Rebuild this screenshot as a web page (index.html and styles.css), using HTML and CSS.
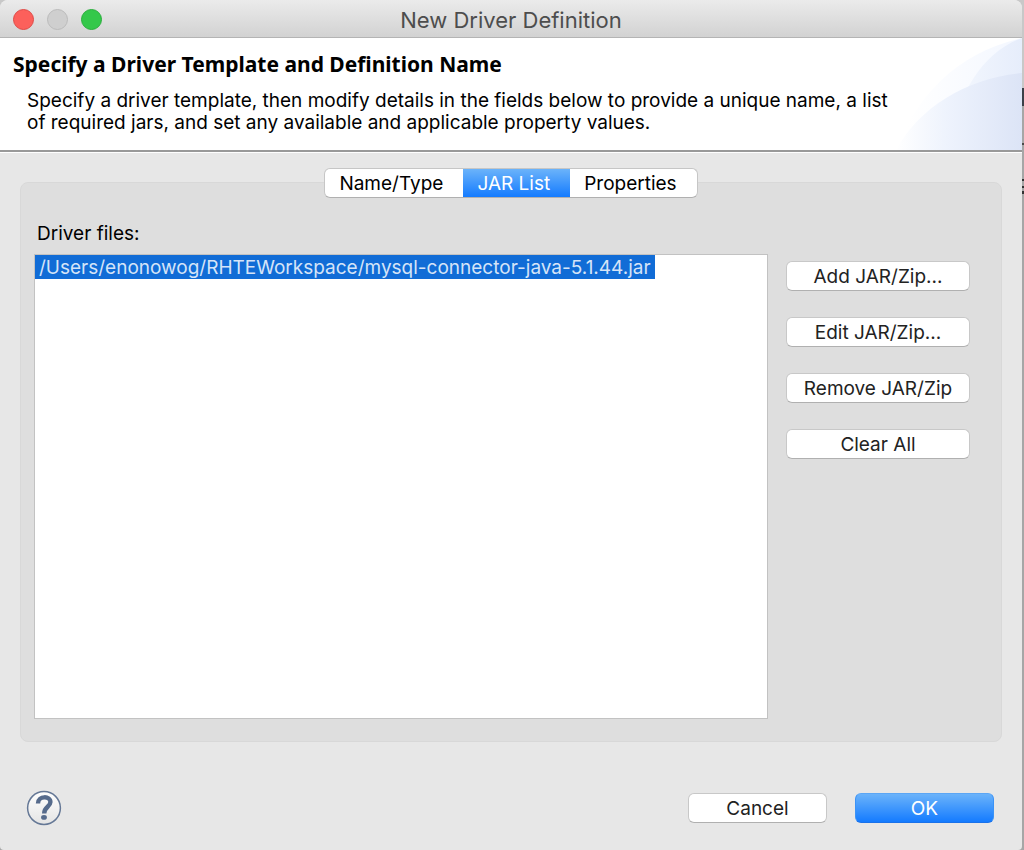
FILE: index.html
```
<!DOCTYPE html>
<html lang="en">
<head>
    <meta charset="UTF-8">
    <meta name="viewport" content="width=device-width, initial-scale=1.0">
    <title>New Driver Definition</title>
    <link rel="stylesheet" href="styles.css">
</head>
<body>
    <div class="window">
        <div class="titlebar">
            <div class="lights">
                <button class="light close" aria-label="Close"></button>
                <button class="light minimize" aria-label="Minimize" disabled></button>
                <button class="light zoom" aria-label="Zoom"></button>
            </div>
            <div class="title">New Driver Definition</div>
        </div>

        <div class="header">
            <svg class="header-art" width="130" height="112" viewBox="0 0 130 112" aria-hidden="true">
                <defs>
                    <linearGradient id="outer" gradientUnits="userSpaceOnUse" x1="15" y1="0" x2="130" y2="0">
                        <stop offset="0" stop-color="#ffffff"/>
                        <stop offset="1" stop-color="#f3f7ff"/>
                    </linearGradient>
                    <linearGradient id="middle" gradientUnits="userSpaceOnUse" x1="65" y1="0" x2="130" y2="0">
                        <stop offset="0" stop-color="#f3f7fe"/>
                        <stop offset="1" stop-color="#e6edfb"/>
                    </linearGradient>
                    <linearGradient id="inner" gradientUnits="userSpaceOnUse" x1="4" y1="0" x2="130" y2="0">
                        <stop offset="0" stop-color="#ffffff"/>
                        <stop offset="0.4" stop-color="#eef3fd"/>
                        <stop offset="1" stop-color="#dce4f6"/>
                    </linearGradient>
                </defs>
                <path fill="url(#outer)" d="M4 112C24 58 66 14 130 0V112Z"/>
                <path fill="url(#middle)" d="M56 112C66 52 92 14 130 0V112Z"/>
                <path fill="url(#inner)" d="M4 112C28 68 76 40 130 35V112Z"/>
            </svg>
            <h1>Specify a Driver Template and Definition Name</h1>
            <p>Specify a driver template, then modify details in the fields below to provide a unique name, a list of required jars, and set any available and applicable property values.</p>
        </div>

        <div class="content">
            <div class="group">
                <div class="tabs" role="tablist">
                    <button class="tab" role="tab" aria-selected="false">Name/Type</button>
                    <button class="tab active" role="tab" aria-selected="true">JAR List</button>
                    <button class="tab" role="tab" aria-selected="false">Properties</button>
                </div>

                <div class="list-label" id="filesLabel">Driver files:</div>
                <div class="columns">
                    <ul class="file-list" role="listbox" aria-labelledby="filesLabel" tabindex="0">
                        <li class="selected" role="option" aria-selected="true">/Users/enonowog/RHTEWorkspace/mysql-connector-java-5.1.44.jar</li>
                    </ul>
                    <div class="actions">
                        <button class="btn">Add JAR/Zip...</button>
                        <button class="btn">Edit JAR/Zip...</button>
                        <button class="btn">Remove JAR/Zip</button>
                        <button class="btn">Clear All</button>
                    </div>
                </div>
            </div>

            <div class="footer">
                <button class="help" aria-label="Help">
                    <svg width="36" height="36" viewBox="0 0 36 36" aria-hidden="true">
                        <defs>
                            <linearGradient id="helpFill" x1="0" y1="0" x2="0" y2="1">
                                <stop offset="0" stop-color="#ffffff"/>
                                <stop offset="1" stop-color="#e4e4e4"/>
                            </linearGradient>
                        </defs>
                        <circle cx="18" cy="18" r="16.4" fill="url(#helpFill)" stroke="#657896" stroke-width="1.5"/>
                        <path d="M12 13.4C12 5.4 24.8 5.6 24.4 12.2C24.2 17 18.2 16.8 18.2 23.4" fill="none" stroke="#566b8c" stroke-width="4.4"/>
                        <ellipse cx="18" cy="27.4" rx="2.9" ry="2.3" fill="#566b8c"/>
                    </svg>
                </button>
                <button class="btn">Cancel</button>
                <button class="btn primary">OK</button>
            </div>
        </div>
    </div>
</body>
</html>
```
FILE: styles.css
```
* {
    margin: 0;
    padding: 0;
    box-sizing: border-box;
}

/* The strip on the right is the desktop showing past the window */
body {
    min-height: 100vh;
    padding-right: 2px;
    background: linear-gradient(#c8c8c8 88px, #3c4048 88px, #3c4048 106px, #a6a6a6 106px, #a6a6a6 143px, #4a4a4a 143px, #4a4a4a 145px, #a6a6a6 145px, #a6a6a6 179px, #333 179px, #333 181px, #a6a6a6 181px, #a6a6a6 186px, #333 186px, #333 188px, #a6a6a6 188px, #a6a6a6 191px, #333 191px, #333 194px, #a6a6a6 194px);
    color: #000;
    font-family: Inter, Roboto, sans-serif;
    font-size: 19px;
    line-height: 22px;
}

button {
    font: inherit;
    border: none;
}

.window {
    display: flex;
    flex-direction: column;
    min-height: 100vh;
    background: #e7e7e7;
    border-radius: 8px 8px 4px 4px;
    overflow: hidden;
}

/* Title bar */
.titlebar {
    display: grid;
    grid-template-columns: 1fr auto 1fr;
    align-items: center;
    height: 38px;
    padding: 2px 12px 0;
    background: linear-gradient(#ebebeb, #d2d2d2);
    border-bottom: 1px solid #b4b4b4;
}

.lights {
    display: flex;
    gap: 13px;
    padding-left: 1px;
}

.light {
    width: 21px;
    height: 21px;
    border-radius: 50%;
    border: 1px solid;
}

.close {
    background: #fc605b;
    border-color: #df4a46;
}

.minimize {
    background: #cfcfcf;
    border-color: #bbb;
}

.zoom {
    background: #34c84a;
    border-color: #2aae3c;
}

.title {
    color: #4d4d4d;
    font-size: 22px;
}

/* Header */
.header {
    position: relative;
    padding: 14px 120px 16px 13px;
    background: #fff;
    border-bottom: 2px solid #999;
}

.header-art {
    position: absolute;
    top: 0;
    right: 0;
}

.header h1 {
    font-family: "Noto Sans", "Open Sans", sans-serif;
    font-size: 21px;
    line-height: 24px;
    font-weight: bold;
}

.header p {
    margin: 14px 0 0 14px;
}

/* Content */
.content {
    flex: 1;
    display: flex;
    flex-direction: column;
    padding: 29px 20px 24px;
    border-top: 1px solid #fff;
}

.group {
    flex: 1;
    display: flex;
    flex-direction: column;
    padding: 0 31px 22px 13px;
    background: #dedede;
    border: 1px solid #d8d8d8;
    border-radius: 8px;
}

.tabs {
    display: flex;
    align-self: center;
    margin: -15px 0 24px 18px;
    background: #fff;
    border: 1px solid #c6c6c6;
    border-bottom-color: #b0b0b0;
    border-radius: 6px;
}

.tab {
    height: 28px;
    padding: 2px 20px 0 14px;
    background: none;
}

.tab.active {
    background: linear-gradient(#6bb3fa, #147bff);
    color: #fff;
}

.list-label {
    margin: 1px 0 9px 3px;
}

.columns {
    flex: 1;
    display: flex;
    gap: 18px;
}

.file-list {
    flex: 1;
    background: #fff;
    border: 1px solid #c2c2c2;
    list-style: none;
}

.selected {
    width: fit-content;
    padding: 2px 4px 0;
    background: #116cd6;
    color: #d5e4f8;
}

.actions {
    display: flex;
    flex-direction: column;
    gap: 26px;
    width: 184px;
    padding-top: 7px;
}

.btn {
    height: 30px;
    padding-top: 1px;
    background: #fff;
    border: 1px solid #c8c8c8;
    border-bottom-color: #b0b0b0;
    border-radius: 6px;
    color: #222;
}

/* Footer */
.footer {
    display: flex;
    align-items: center;
    gap: 28px;
    margin-top: 48px;
    padding: 0 8px 0 6px;
}

.footer .btn {
    width: 139px;
}

.help {
    width: 36px;
    height: 36px;
    margin-right: auto;
    background: none;
}

.help svg {
    display: block;
}

.btn.primary {
    background: linear-gradient(#6bb3fa, #147bff);
    border-color: #5ba6f5 #3b93f7 #1a72ea;
    color: #fff;
}
```
